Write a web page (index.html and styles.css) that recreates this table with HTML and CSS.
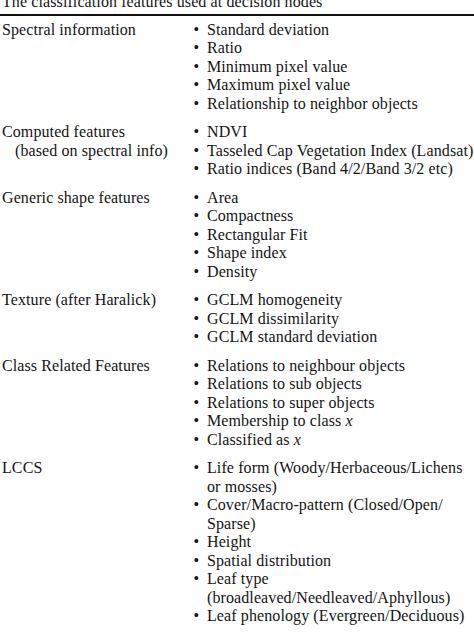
FILE: index.html
```html
<!DOCTYPE html>
<html lang="en">
<head>
<meta charset="utf-8">
<title>The classification features used at decision nodes</title>
<link rel="stylesheet" href="styles.css">
</head>
<body>
<div class="table">
  <div class="caption">The classification features used at decision nodes</div>
  <div class="body">
    <div class="row">
      <div class="label">Spectral information</div>
      <ul class="items">
        <li><span class="dot">•</span><span>Standard deviation</span></li>
        <li><span class="dot">•</span><span>Ratio</span></li>
        <li><span class="dot">•</span><span>Minimum pixel value</span></li>
        <li><span class="dot">•</span><span>Maximum pixel value</span></li>
        <li><span class="dot">•</span><span>Relationship to neighbor objects</span></li>
      </ul>
    </div>
    <div class="row">
      <div class="label">Computed features<span class="sub">(based on spectral info)</span></div>
      <ul class="items">
        <li><span class="dot">•</span><span>NDVI</span></li>
        <li><span class="dot">•</span><span>Tasseled Cap Vegetation Index (Landsat)</span></li>
        <li><span class="dot">•</span><span>Ratio indices (Band 4/2/Band 3/2 etc)</span></li>
      </ul>
    </div>
    <div class="row">
      <div class="label">Generic shape features</div>
      <ul class="items">
        <li><span class="dot">•</span><span>Area</span></li>
        <li><span class="dot">•</span><span>Compactness</span></li>
        <li><span class="dot">•</span><span>Rectangular Fit</span></li>
        <li><span class="dot">•</span><span>Shape index</span></li>
        <li><span class="dot">•</span><span>Density</span></li>
      </ul>
    </div>
    <div class="row">
      <div class="label">Texture (after Haralick)</div>
      <ul class="items">
        <li><span class="dot">•</span><span>GCLM homogeneity</span></li>
        <li><span class="dot">•</span><span>GCLM dissimilarity</span></li>
        <li><span class="dot">•</span><span>GCLM standard deviation</span></li>
      </ul>
    </div>
    <div class="row">
      <div class="label">Class Related Features</div>
      <ul class="items">
        <li><span class="dot">•</span><span>Relations to neighbour objects</span></li>
        <li><span class="dot">•</span><span>Relations to sub objects</span></li>
        <li><span class="dot">•</span><span>Relations to super objects</span></li>
        <li><span class="dot">•</span><span>Membership to class <i>x</i></span></li>
        <li><span class="dot">•</span><span>Classified as <i>x</i></span></li>
      </ul>
    </div>
    <div class="row">
      <div class="label">LCCS</div>
      <ul class="items">
        <li><span class="dot">•</span><span>Life form (Woody/Herbaceous/Lichens<br>or mosses)</span></li>
        <li><span class="dot">•</span><span>Cover/Macro-pattern (Closed/Open/<br>Sparse)</span></li>
        <li><span class="dot">•</span><span>Height</span></li>
        <li><span class="dot">•</span><span>Spatial distribution</span></li>
        <li><span class="dot">•</span><span>Leaf type<br>(broadleaved/Needleaved/Aphyllous)</span></li>
        <li><span class="dot">•</span><span>Leaf phenology (Evergreen/Deciduous)</span></li>
      </ul>
    </div>
  </div>
</div>
</body>
</html>
```

FILE: styles.css
```css
html, body {
  margin: 0;
  padding: 0;
  background: #ffffff;
}

body {
  font-family: "Liberation Serif", "Times New Roman", serif;
  font-size: 16px;
  line-height: 18.5px;
  letter-spacing: 0.1px;
  color: #141414;
  overflow: hidden;
}

.table {
  display: flow-root;
  width: 474px;
}

.caption {
  margin-top: -7.4px;
  padding: 0 0 2.4px 2px;
  white-space: nowrap;
}

.body {
  border-top: 2px solid #111111;
  padding-top: 5.3px;
}

.row {
  display: grid;
  grid-template-columns: 193.5px 1fr;
  margin-bottom: 10px;
}

.label {
  padding-left: 2px;
  white-space: nowrap;
}

.sub {
  display: block;
  padding-left: 13px;
}

.items {
  list-style: none;
  margin: 0;
  padding: 0;
}

.items li {
  display: grid;
  grid-template-columns: 13.5px 1fr;
  white-space: nowrap;
}

.dot {
  display: block;
}

i {
  font-style: italic;
}
```
